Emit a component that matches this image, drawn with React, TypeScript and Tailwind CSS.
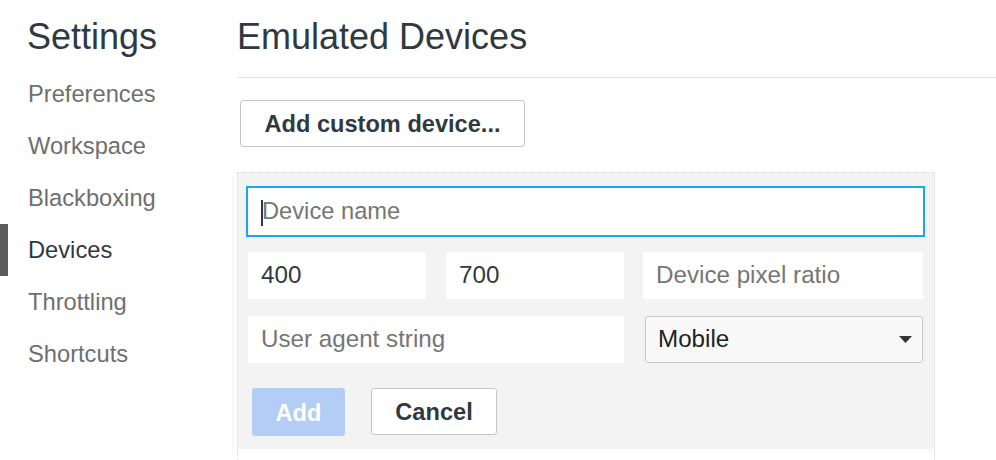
import React from "react";

const navItems = ["Preferences", "Workspace", "Blackboxing", "Devices", "Throttling", "Shortcuts"];

const App = () => {
  const active = "Devices";

  return (
    <div
      className="w-[996px] h-[460px] flex bg-white overflow-hidden text-[#303942]"
      style={{ fontFamily: '"Liberation Sans", Arial, sans-serif' }}
    >
      {/* Sidebar */}
      <div className="w-[237px] shrink-0 flex flex-col">
        <div className="h-[68px] pt-[19px] pl-[27px] text-[36px] leading-[36px]">Settings</div>
        {navItems.map((item) => (
          <div key={item} className="h-[52px] flex">
            <div className={`w-[8px] h-full ${item === active ? "bg-[#5c5c5c]" : ""}`} />
            <div
              className={`pl-[20px] text-[23.7px] leading-[52px] ${
                item === active ? "text-[#303942]" : "text-[#6f6f6f]"
              }`}
            >
              {item}
            </div>
          </div>
        ))}
      </div>

      {/* Main */}
      <div className="flex-1 flex flex-col">
        <div className="h-[78px] pt-[19px] text-[36px] leading-[36px] border-b border-[#e3e3e3]">
          Emulated Devices
        </div>

        <div className="pt-[22px] pl-[3px]">
          <button className="w-[285px] h-[47px] pt-[3px] border-[1.5px] border-[#c6c6c6] rounded-[3px] bg-white text-[23.6px] font-bold text-[#303942]">
            Add custom device...
          </button>
        </div>

        {/* Device editor */}
        <div className="mt-[25px] w-[698px] flex-1 border-t border-l border-r border-dotted border-[#d8d8d8] flex flex-col">
          <div className="bg-[#f3f3f3] pt-[13px] pl-[8px] pr-[9px] pb-[13px]">
            <div className="relative h-[51px] border-2 border-[#1aa7ec] bg-white flex items-center pl-[14px] text-[23.7px] text-[#767676]">
              <span className="absolute left-[13px] top-[12px] w-[2px] h-[26px] bg-[#303942]" />
              Device name
            </div>

            <div className="mt-[15px] ml-[2px] flex gap-[20px] text-[24.2px]">
              <div className="w-[178px] h-[47px] bg-white flex items-center pl-[13px]">400</div>
              <div className="w-[178px] h-[47px] bg-white flex items-center pl-[13px]">700</div>
              <div className="w-[280px] h-[47px] ml-[-1px] bg-white flex items-center pl-[13px] text-[#767676]">
                Device pixel ratio
              </div>
            </div>

            <div className="mt-[17px] ml-[2px] flex gap-[21px] text-[24.2px]">
              <div className="w-[376px] h-[47px] bg-white flex items-center pl-[13px] text-[#767676]">
                User agent string
              </div>
              <div className="w-[278px] h-[47px] bg-[#f9f9f9] border-[1.5px] border-[#c8c8c8] rounded-[3px] flex items-center justify-between pl-[12px] pr-[10px] text-[#222]">
                <span>Mobile</span>
                <svg width="13" height="7" viewBox="0 0 13 7">
                  <path d="M0 0 L13 0 L6.5 7 Z" fill="#333" />
                </svg>
              </div>
            </div>

            <div className="mt-[25px] ml-[6px] flex gap-[26px]">
              <button className="w-[93px] h-[48px] pt-[3px] rounded-[3px] bg-[#b3cdf5] text-white text-[23.6px] font-bold">
                Add
              </button>
              <button className="w-[126px] h-[47px] pt-[3px] rounded-[3px] bg-white border-[1.5px] border-[#c6c6c6] text-[23.6px] font-bold text-[#303942]">
                Cancel
              </button>
            </div>
          </div>
          <div className="flex-1 bg-white" />
        </div>
      </div>
    </div>
  );
};

export default App;
